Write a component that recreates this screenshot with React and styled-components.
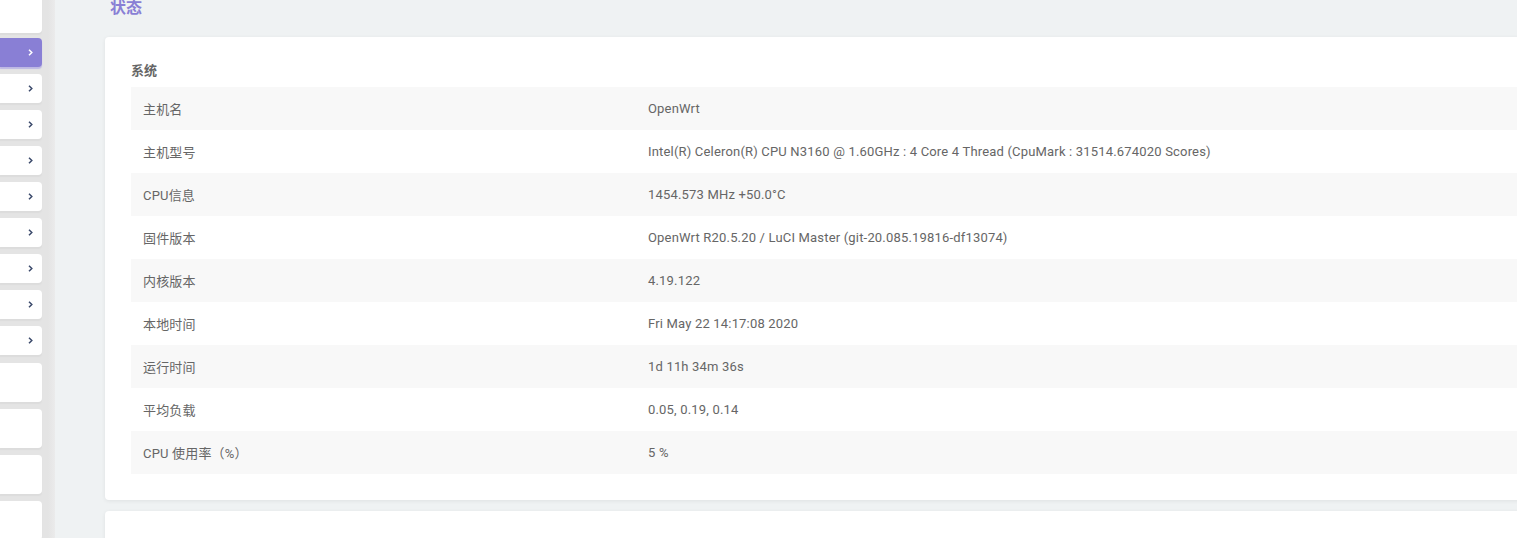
import React from "react";
import styled, { createGlobalStyle } from "styled-components";

const Global = createGlobalStyle`
  html, body { margin: 0; padding: 0; height: 100%; overflow: hidden; }
  body {
    background: #eff2f3;
    font-family: Roboto, "Noto Sans CJK SC", "Liberation Sans", sans-serif;
    color: #666;
  }
  #root { height: 100%; }
`;

const Page = styled.div`
  display: flex;
  height: 538px;
  overflow: hidden;
`;

const Sidebar = styled.aside`
  flex: 0 0 55px;
  background: linear-gradient(to right, #e4e4e4 0, #e4e4e4 48px, #ebebeb 55px);
  display: flex;
  flex-direction: column;
  margin-top: -6px;
`;

const NavItem = styled.div`
  width: 42px;
  height: ${(p) => (p.$big ? 39 : 29)}px;
  margin-bottom: 7px;
  box-sizing: border-box;
  background: ${(p) => (p.$active ? "#897fd5" : "#fff")};
  border-radius: 0 4px 4px 0;
  box-shadow: 0 2px 1px ${(p) => (p.$active ? "#bdb8e4" : "#dcdcdc")};
  display: flex;
  align-items: center;
  justify-content: flex-end;
  padding-right: 9px;
  flex-shrink: 0;
`;

const Chevron = ({ color }) => (
  <svg width="5" height="7" viewBox="0 0 5 7">
    <path d="M1 0.8 L3.8 3.5 L1 6.2" fill="none" stroke={color} strokeWidth="1.5" />
  </svg>
);

const Main = styled.main`
  flex: 1;
  min-width: 0;
  padding-left: 50px;
  margin-right: -30px;
  display: flex;
  flex-direction: column;
`;

const Title = styled.h2`
  margin: -4px 0 0 5px;
  font-size: 16px;
  line-height: 20px;
  font-weight: 700;
  color: #897fd5;
  height: 21px;
  font-family: "Noto Sans CJK SC", sans-serif;
`;

const Card = styled.section`
  background: #fff;
  border-radius: 4px;
  box-shadow: 0 1px 4px rgba(0, 0, 0, 0.07);
  padding: 24px 0 26px 26px;
  margin-top: ${(p) => p.$gap}px;
  flex-shrink: 0;
`;

const Heading = styled.h3`
  margin: 0 0 8px;
  font-size: 13px;
  line-height: 18px;
  font-weight: 700;
  color: #666;
  font-family: "Noto Sans CJK SC", sans-serif;
`;

const Table = styled.div`
  display: flex;
  flex-direction: column;
`;

const Row = styled.div`
  display: grid;
  grid-template-columns: 505px 1fr;
  height: 43px;
  align-items: center;
  background: ${(p) => (p.$odd ? "#f8f8f8" : "#fff")};
  font-size: 13px;
  color: #666;
`;

const Cell = styled.div`
  padding-left: 12px;
  white-space: nowrap;
  letter-spacing: 0.18px;
`;

const rows = [
  ["主机名", "OpenWrt"],
  ["主机型号", "Intel(R) Celeron(R) CPU N3160 @ 1.60GHz : 4 Core 4 Thread (CpuMark : 31514.674020 Scores)"],
  ["CPU信息", "1454.573 MHz +50.0°C"],
  ["固件版本", "OpenWrt R20.5.20 / LuCI Master (git-20.085.19816-df13074)"],
  ["内核版本", "4.19.122"],
  ["本地时间", "Fri May 22 14:17:08 2020"],
  ["运行时间", "1d 11h 34m 36s"],
  ["平均负载", "0.05, 0.19, 0.14"],
  ["CPU 使用率（%）", "5 %"],
];

export default function App() {
  return (
    <>
      <Global />
      <Page>
        <Sidebar>
          <NavItem $big style={{ marginBottom: 5 }} />
          <NavItem $active>
            <Chevron color="#fff" />
          </NavItem>
          {Array.from({ length: 8 }).map((_, i) => (
            <NavItem key={i}>
              <Chevron color="#3b4a6b" />
            </NavItem>
          ))}
          <NavItem $big style={{ marginTop: 1 }} />
          <NavItem $big />
          <NavItem $big />
          <NavItem $big />
        </Sidebar>
        <Main>
          <Title>状态</Title>
          <Card $gap={21}>
            <Heading>系统</Heading>
            <Table>
              {rows.map(([k, v], i) => (
                <Row key={k} $odd={i % 2 === 0}>
                  <Cell>{k}</Cell>
                  <Cell>{v}</Cell>
                </Row>
              ))}
            </Table>
          </Card>
          <Card $gap={11}>
            <Heading>内存</Heading>
          </Card>
        </Main>
      </Page>
    </>
  );
}
